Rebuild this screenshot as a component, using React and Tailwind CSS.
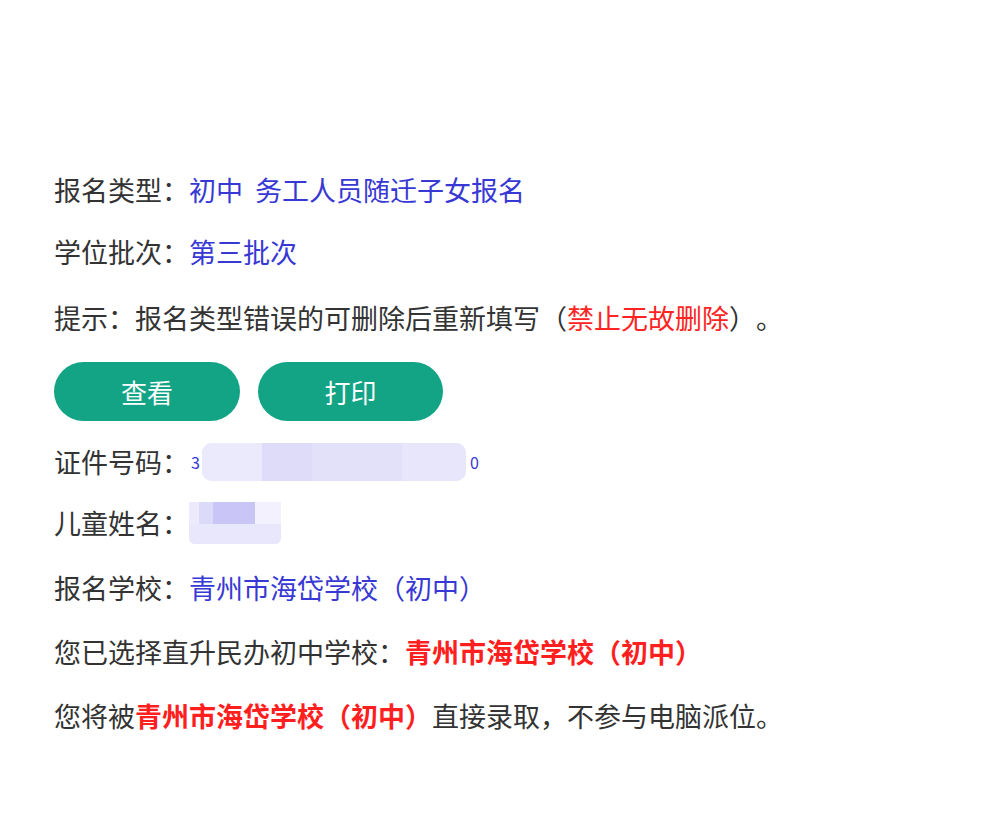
import React from 'react';

const font = { fontFamily: '"Noto Sans CJK SC", "Noto Sans", sans-serif' };

const Row = ({ className = '', children }) => (
  <div className={`h-[40px] leading-[40px] whitespace-nowrap ${className}`}>{children}</div>
);

const App = () => {
  return (
    <div
      className="w-[995px] h-[816px] bg-white overflow-hidden text-[27px] text-[#333] [text-spacing-trim:space-all]"
      style={font}
    >
      <div className="pl-[54px] pt-[170px] flex flex-col">
        <Row>
          报名类型：<span className="text-[#3838d4]">初中&nbsp;&nbsp;务工人员随迁子女报名</span>
        </Row>
        <Row className="mt-[22px]">
          学位批次：<span className="text-[#3838d4]">第三批次</span>
        </Row>
        <Row className="mt-[26px]">
          提示：报名类型错误的可删除后重新填写（<span className="text-[#ff2424]">禁止无故删除</span>）。
        </Row>

        <div className="mt-[24px] flex gap-[18px]">
          <button className="w-[186px] h-[59px] rounded-full bg-[#13a486] text-white text-[26px] leading-none">
            查看
          </button>
          <button className="w-[185px] h-[59px] rounded-full bg-[#13a486] text-white text-[26px] leading-none">
            打印
          </button>
        </div>

        <Row className="mt-[21px] flex items-center">
          <span>证件号码：</span>
          <span className="text-[16px] text-[#3838d4] ml-[2px]">3</span>
          <span className="ml-[2px] w-[264px] h-[38px] rounded-[10px] bg-[#e6e4fb] flex">
            <span className="w-[60px] h-full bg-[#ebe9fc] rounded-l-[10px]" />
            <span className="w-[50px] h-full bg-[#dedcf9]" />
            <span className="w-[90px] h-full bg-[#e3e1fa]" />
            <span className="flex-1 h-full bg-[#e8e6fb] rounded-r-[10px]" />
          </span>
          <span className="text-[16px] text-[#3838d4] ml-[4px]">0</span>
        </Row>

        <Row className="mt-[21px] flex items-center">
          <span>儿童姓名：</span>
          <span className="ml-[0px] w-[92px] h-[42px] rounded-[6px] bg-[#eeecfc] flex flex-col">
            <span className="flex h-[22px]">
              <span className="w-[10px] h-full bg-[#eceafc]" />
              <span className="w-[14px] h-full bg-[#dcdaf9]" />
              <span className="w-[42px] h-full bg-[#c9c6f7]" />
              <span className="flex-1 h-full bg-[#f2f1fd]" />
            </span>
            <span className="flex-1 bg-[#e9e7fb] rounded-b-[6px]" />
          </span>
        </Row>

        <Row className="mt-[25px]">
          报名学校：<span className="text-[#3838d4]">青州市海岱学校（初中）</span>
        </Row>
        <Row className="mt-[24px]">
          您已选择直升民办初中学校：<span className="text-[#ff1f1f] font-bold">青州市海岱学校（初中）</span>
        </Row>
        <Row className="mt-[24px]">
          您将被<span className="text-[#ff1f1f] font-bold">青州市海岱学校（初中）</span>直接录取，不参与电脑派位。
        </Row>
      </div>
    </div>
  );
};

export default App;
